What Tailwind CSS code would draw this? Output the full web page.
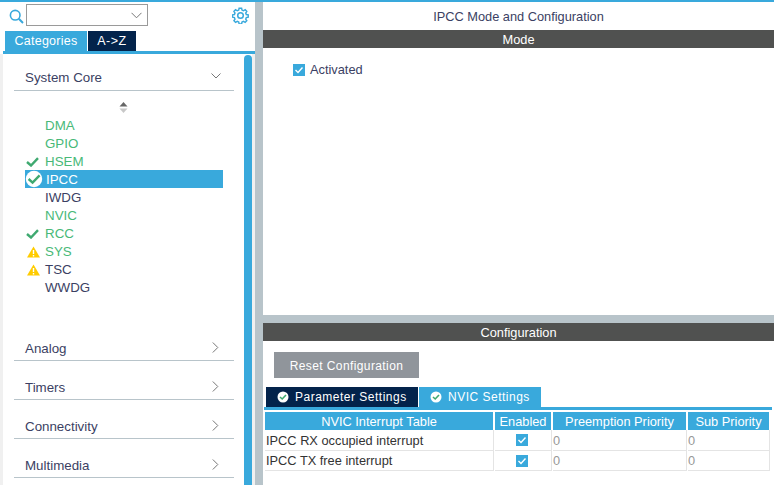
<!DOCTYPE html>
<html>

<head>
    <meta charset="UTF-8">
    <title>IPCC Mode and Configuration</title>
    <script src="https://cdn.jsdelivr.net/npm/@tailwindcss/browser@4"></script>
</head>

<body class="w-[774px] h-[485px] overflow-hidden bg-white font-['Liberation_Sans',sans-serif] text-[13.33px] text-[#3b3f63]">
    <!-- top accent line -->
    <div class="h-[2px] bg-[#39a9dc]"></div>

    <div class="flex h-[483px]">
        <!-- left panel -->
        <aside class="w-[255px] shrink-0 flex flex-col">
            <!-- search row -->
            <div class="h-[29px] flex items-start">
                <svg class="ml-[9px] mt-[7px]" width="15" height="15" viewBox="0 0 15 15" fill="none" stroke="#39a9dc" stroke-width="1.6">
                    <circle cx="6.2" cy="6.2" r="4.8" />
                    <path d="M9.8 9.8 L14 14" stroke-width="2" />
                </svg>
                <div class="ml-[2px] mt-[2px] w-[122px] h-[22px] border border-[#9a9a9a] flex items-center justify-end pr-[5px]">
                    <svg width="11" height="7" viewBox="0 0 11 7" fill="none" stroke="#777" stroke-width="1"><path d="M.5 .8 L5.5 5.8 L10.5 .8" /></svg>
                </div>
                <svg class="ml-[84px] mt-[5px]" width="17" height="17" viewBox="0 0 17 17" fill="none" stroke="#39a9dc" stroke-width="1.5">
                    <circle cx="8.5" cy="8.5" r="2.8" />
                    <path d="M7.2 1 h2.6 l.4 2 l1.5 .7 l1.8 -1.1 l1.7 1.8 l-1.1 1.7 l.6 1.5 l2 .4 v2.4 l-2 .5 l-.6 1.5 l1.1 1.7 l-1.7 1.7 l-1.8 -1 l-1.5 .6 l-.4 2 h-2.6 l-.4 -2 l-1.5 -.6 l-1.8 1 l-1.7 -1.7 l1.1 -1.7 l-.6 -1.5 l-2 -.5 v-2.4 l2 -.4 l.6 -1.5 l-1.1 -1.7 l1.7 -1.8 l1.8 1.1 l1.5 -.7 z" transform="translate(.2 .2) scale(.96)" />
                </svg>
            </div>

            <!-- category tabs -->
            <div class="flex h-[20px] ml-[5px] text-white text-[12.5px]">
                <div class="w-[82px] bg-[#39a9dc] flex items-center justify-center tracking-[.25px]">Categories</div>
                <div class="w-[48px] ml-[1px] bg-[#03234b] flex items-center justify-center tracking-[.5px]">A-&gt;Z</div>
            </div>
            <div class="h-[3px] ml-[3px] bg-[#39a9dc]"></div>

            <!-- category list and scrollbar -->
            <div class="flex-1 flex min-h-0 border-l-[3px] border-[#f0f0f0]">
                <div class="w-[241px] shrink-0 pl-[11px]">
                    <div class="w-[220px] h-[37px] pt-[14px] border-b border-[#b8c4ca] flex justify-between items-start pl-[11px] pr-[13px]">
                        <span>System Core</span>
                        <svg class="mt-[5px]" width="10" height="6" viewBox="0 0 10 6" fill="none" stroke="#777" stroke-width="1"><path d="M.5 .5 L5 5 L9.5 .5" /></svg>
                    </div>

                    <!-- sort arrows -->
                    <div class="h-[25px] w-[220px] flex items-start pt-[11px] pl-[105px]">
                        <svg width="9" height="11" viewBox="0 0 9 11"><path d="M4.5 0 L8.5 4.5 H.5 z" fill="#666" /><path d="M.5 6.5 H8.5 L4.5 11 z" fill="#c8c8c8" /></svg>
                    </div>

                    <!-- peripheral list -->
                    <ul class="w-[198px] ml-[11px] text-[#48b978] leading-[20px]">
                        <li class="h-[18px] pl-[20px]">DMA</li>
                        <li class="h-[18px] pl-[20px]">GPIO</li>
                        <li class="h-[18px] pt-[2px] flex items-center">
                            <svg class="ml-[1px] mr-[6px]" width="13" height="10" viewBox="0 0 13 10" fill="none" stroke="#3fa970" stroke-width="2.4"><path d="M1 5 L5 8.5 L12 1.2" /></svg>HSEM
                        </li>
                        <li class="h-[18px] pt-[2px] flex items-center bg-[#39a9dc] text-white">
                            <svg class="mr-[3px] -mt-[2px]" width="18" height="18" viewBox="0 0 18 18" fill="none"><circle cx="9" cy="9" r="8.2" fill="#fff" /><path d="M3.6 9 L7.6 12.6 L14.6 5.4" stroke="#3fa970" stroke-width="2.4" /></svg>IPCC
                        </li>
                        <li class="h-[18px] pl-[20px] text-[#3b3f63]">IWDG</li>
                        <li class="h-[18px] pl-[20px]">NVIC</li>
                        <li class="h-[18px] pt-[2px] flex items-center">
                            <svg class="ml-[1px] mr-[6px]" width="13" height="10" viewBox="0 0 13 10" fill="none" stroke="#3fa970" stroke-width="2.4"><path d="M1 5 L5 8.5 L12 1.2" /></svg>RCC
                        </li>
                        <li class="h-[18px] pt-[2px] flex items-center">
                            <svg class="ml-[2px] mr-[5px]" width="13" height="12" viewBox="0 0 13 12"><path d="M6.5 .5 L13 11.5 H0 z" fill="#ffcc00" /><path d="M6.5 4 V8 M6.5 9 V10.5" stroke="#fff" stroke-width="1.4" /></svg>SYS
                        </li>
                        <li class="h-[18px] pt-[2px] flex items-center text-[#3b3f63]">
                            <svg class="ml-[2px] mr-[5px]" width="13" height="12" viewBox="0 0 13 12"><path d="M6.5 .5 L13 11.5 H0 z" fill="#ffcc00" /><path d="M6.5 4 V8 M6.5 9 V10.5" stroke="#fff" stroke-width="1.4" /></svg>TSC
                        </li>
                        <li class="h-[18px] pl-[20px] text-[#3b3f63]">WWDG</li>
                    </ul>

                    <!-- collapsed categories -->
                    <div class="w-[220px] mt-[26px]">
                        <div class="h-[39px] border-b border-[#b8c4ca] flex justify-between items-end pb-[1px] pl-[11px] pr-[15px]">
                            <span>Analog</span>
                            <svg class="mb-[6px]" width="7" height="11" viewBox="0 0 7 11" fill="none" stroke="#777"><path d="M.8 .5 L5.8 5.5 L.8 10.5" /></svg>
                        </div>
                        <div class="h-[39px] border-b border-[#b8c4ca] flex justify-between items-end pb-[1px] pl-[11px] pr-[15px]">
                            <span>Timers</span>
                            <svg class="mb-[6px]" width="7" height="11" viewBox="0 0 7 11" fill="none" stroke="#777"><path d="M.8 .5 L5.8 5.5 L.8 10.5" /></svg>
                        </div>
                        <div class="h-[39px] border-b border-[#b8c4ca] flex justify-between items-end pb-[1px] pl-[11px] pr-[15px]">
                            <span>Connectivity</span>
                            <svg class="mb-[6px]" width="7" height="11" viewBox="0 0 7 11" fill="none" stroke="#777"><path d="M.8 .5 L5.8 5.5 L.8 10.5" /></svg>
                        </div>
                        <div class="h-[39px] border-b border-[#b8c4ca] flex justify-between items-end pb-[1px] pl-[11px] pr-[15px]">
                            <span>Multimedia</span>
                            <svg class="mb-[6px]" width="7" height="11" viewBox="0 0 7 11" fill="none" stroke="#777"><path d="M.8 .5 L5.8 5.5 L.8 10.5" /></svg>
                        </div>
                    </div>
                </div>
                <!-- scrollbar -->
                <div class="w-[8px] mt-[1px] rounded-t-[4px] bg-[#39a9dc]"></div>
                <div class="w-[3px] bg-[#f0f0f0]"></div>
            </div>
        </aside>

        <!-- splitter -->
        <div class="w-[8px] shrink-0 bg-[#b8c4ca]"></div>

        <!-- right panel -->
        <main class="flex-1 flex flex-col min-w-0 text-[12.8px]">
            <div class="h-[28px] pt-[1px] flex items-center justify-center text-[#3b3f63]">IPCC Mode and Configuration</div>
            <div class="h-[18px] pt-[2px] bg-[#505150] text-white flex items-center justify-center">Mode</div>
            <div class="h-[267px] pt-[12px] pl-[30px]">
                <label class="flex items-center gap-[5px]">
                    <svg width="12" height="12" viewBox="0 0 12 12"><rect width="12" height="12" fill="#39a9dc" /><path d="M2.5 6 L5 8.5 L9.5 3.5" fill="none" stroke="#fff" stroke-width="1.4" /></svg>
                    Activated
                </label>
            </div>

            <div class="h-[8px] bg-[#b8c4ca]"></div>
            <div class="h-[18px] pt-[2px] bg-[#505150] text-white flex items-center justify-center">Configuration</div>

            <div class="pt-[11px] pl-[11px]">
                <button class="block w-[145px] h-[26px] pt-[2px] bg-[#90959b] text-white text-[12px] tracking-[.4px]">Reset Configuration</button>
            </div>

            <!-- config tabs -->
            <div class="flex h-[20px] mt-[9px] ml-[3px] text-white text-[12px] tracking-[.5px]">
                <div class="w-[152px] bg-[#03234b] flex items-center pl-[11px] gap-[6px]">
                    <svg width="12" height="12" viewBox="0 0 12 12" fill="none"><circle cx="6" cy="6" r="5.5" fill="#fff" /><path d="M3 6 L5.2 8 L9 4" stroke="#3fa970" stroke-width="1.6" /></svg>
                    Parameter Settings
                </div>
                <div class="w-[122px] ml-[1px] bg-[#39a9dc] flex items-center pl-[11px] gap-[6px]">
                    <svg width="12" height="12" viewBox="0 0 12 12" fill="none"><circle cx="6" cy="6" r="5.5" fill="#fff" /><path d="M3 6 L5.2 8 L9 4" stroke="#3fa970" stroke-width="1.6" /></svg>
                    NVIC Settings
                </div>
            </div>
            <div class="h-[3px] ml-[1px] mr-[2px] bg-[#39a9dc]"></div>

            <!-- interrupt table -->
            <div class="ml-[2px] mt-[2px] w-[504px] grid grid-cols-[228px_56px_133px_81px] gap-x-[2px]">
                <div class="h-[18px] pt-[2px] bg-[#39a9dc] text-white flex items-center justify-center">NVIC Interrupt Table</div>
                <div class="h-[18px] pt-[2px] bg-[#39a9dc] text-white flex items-center justify-center">Enabled</div>
                <div class="h-[18px] pt-[2px] bg-[#39a9dc] text-white flex items-center justify-center">Preemption Priority</div>
                <div class="h-[18px] pt-[2px] bg-[#39a9dc] text-white flex items-center justify-center">Sub Priority</div>

                <div class="h-[21px] pt-[2px] -mr-[1px] pl-[1px] border-b border-r border-[#e4e4e4] flex items-center text-[#333]">IPCC RX occupied interrupt</div>
                <div class="h-[21px] -mr-[1px] pr-[2px] border-b border-r border-[#e4e4e4] flex items-center justify-center">
                    <svg width="12" height="12" viewBox="0 0 12 12"><rect width="12" height="12" fill="#39a9dc" /><path d="M2.5 6 L5 8.5 L9.5 3.5" fill="none" stroke="#fff" stroke-width="1.4" /></svg>
                </div>
                <div class="h-[21px] pt-[2px] -mr-[1px] border-b border-r border-[#e4e4e4] flex items-center text-[#999]">0</div>
                <div class="h-[21px] pt-[2px] -mr-[1px] border-b border-r border-[#e4e4e4] flex items-center text-[#999]">0</div>

                <div class="h-[20px] -mr-[1px] pl-[1px] border-b border-r border-[#e4e4e4] flex items-center text-[#333]">IPCC TX free interrupt</div>
                <div class="h-[20px] -mr-[1px] pr-[2px] border-b border-r border-[#e4e4e4] flex items-center justify-center">
                    <svg width="12" height="12" viewBox="0 0 12 12"><rect width="12" height="12" fill="#39a9dc" /><path d="M2.5 6 L5 8.5 L9.5 3.5" fill="none" stroke="#fff" stroke-width="1.4" /></svg>
                </div>
                <div class="h-[20px] -mr-[1px] border-b border-r border-[#e4e4e4] flex items-center text-[#999]">0</div>
                <div class="h-[20px] -mr-[1px] border-b border-r border-[#e4e4e4] flex items-center text-[#999]">0</div>
            </div>
        </main>
    </div>
</body>

</html>
